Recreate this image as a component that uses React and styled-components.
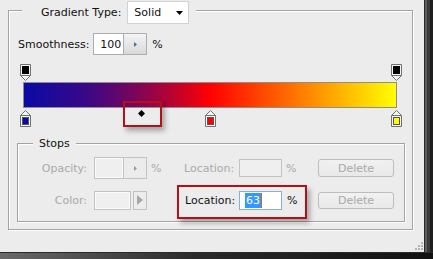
import React from 'react';
import styled, { createGlobalStyle } from 'styled-components';

const GlobalStyle = createGlobalStyle`
  html, body {
    margin: 0;
    padding: 0;
    background: #ececec;
  }
  body {
    font-family: "DejaVu Sans", Verdana, sans-serif;
    font-size: 11px;
    color: #111;
  }
`;

const Screen = styled.div`
  width: 433px;
  height: 259px;
  display: flex;
  flex-direction: column;
  overflow: hidden;
  background: #ececec;
`;

const Main = styled.div`
  display: flex;
  height: 253px;
`;

const Dialog = styled.div`
  position: relative;
  flex: 1;
  box-sizing: border-box;
  padding: 10px 0 0 8px;
`;

const WindowEdge = styled.div`
  width: 9px;
  background: linear-gradient(
    to right,
    #2a2a2a 0 1px,
    #5c5c5c 1px 3px,
    #3a3a3a 3px 6px,
    #1f1f1f 6px
  );
`;

const BottomEdge = styled.div`
  height: 6px;
  border-top: 1px solid #2a2a2a;
  background: linear-gradient(to right, #6a6a6a, #2a2a2a 45%, #111 100%);
`;

const GroupBox = styled.div`
  position: relative;
  box-sizing: border-box;
  width: ${({ $w }) => $w}px;
  height: ${({ $h }) => $h}px;
  margin: ${({ $m }) => $m || 0};
  border: 1px solid #a3a3a3;
  box-shadow: inset 1px 1px 0 #fff, 1px 1px 0 #fff;
`;

const Legend = styled.div`
  display: flex;
  align-items: center;
  width: fit-content;
  height: ${({ $h }) => $h}px;
  margin: ${({ $m }) => $m};
  padding: ${({ $p }) => $p};
  gap: 6px;
  background: #ececec;
  white-space: nowrap;
`;

const Dropdown = styled.div`
  display: flex;
  align-items: center;
  justify-content: space-between;
  box-sizing: border-box;
  width: 62px;
  height: 23px;
  padding: 0 5px 0 6px;
  background: #fff;
  border: 1px solid #d2d2d2;
`;

const Row = styled.div`
  display: flex;
  align-items: center;
  margin: ${({ $m }) => $m};
  white-space: nowrap;
`;

const Label = styled.span`
  color: ${({ $off }) => ($off ? '#a9a9a9' : '#111')};
  margin-right: ${({ $mr }) => $mr || 0}px;
`;

const NumBox = styled.div`
  display: flex;
  align-items: center;
  box-sizing: border-box;
  width: ${({ $w }) => $w}px;
  height: ${({ $h }) => $h}px;
  padding-left: 6px;
  border: 1px solid ${({ $off }) => ($off ? '#c2c2c2' : '#adadad')};
  background: ${({ $off }) => ($off ? '#efefef' : '#fff')};
  box-shadow: ${({ $off }) => ($off ? 'inset 0 0 0 1px #fbfbfb' : 'none')};
`;

const SpinButton = styled.div`
  display: flex;
  align-items: center;
  justify-content: center;
  box-sizing: border-box;
  width: ${({ $w }) => $w}px;
  height: ${({ $h }) => $h}px;
  margin-left: ${({ $gap }) => $gap || 0}px;
  border: 1px solid ${({ $off }) => ($off ? '#c2c2c2' : '#adadad')};
  border-left-width: ${({ $gap }) => ($gap ? 1 : 0)}px;
  background: ${({ $off }) =>
    $off ? '#ececec' : 'linear-gradient(#f4f4f4, #d9d9d9)'};
`;

const Percent = styled.span`
  margin-left: ${({ $ml }) => $ml}px;
  color: ${({ $off }) => ($off ? '#a9a9a9' : '#111')};
`;

const Editor = styled.div`
  position: relative;
  width: 374px;
  margin: 9px 0 0 14px;
`;

const Track = styled.div`
  position: relative;
  height: ${({ $h }) => $h}px;
`;

const StopMark = styled.div`
  position: absolute;
  top: ${({ $top }) => $top}px;
  width: 11px;
  height: 17px;
  line-height: 0;
`;

const Bar = styled.div`
  box-sizing: border-box;
  height: 26px;
  border: 1px solid #8e8e8e;
`;

const Callout = styled.div`
  position: absolute;
  box-sizing: border-box;
  border: 2px solid #b3111a;
  box-shadow: 3px 4px 5px rgba(0, 0, 0, 0.3);
  pointer-events: none;
`;

const StopGrid = styled.div`
  display: grid;
  grid-template-columns: 76px 53px 37px 55px 43px 36px 76px;
  grid-template-rows: 22px 22px;
  row-gap: 10px;
  align-items: center;
  margin-top: 7px;
  white-space: nowrap;
`;

const GridLabel = styled.span`
  text-align: ${({ $right }) => ($right ? 'right' : 'left')};
  padding-right: ${({ $right }) => ($right ? 7 : 0)}px;
  padding-left: ${({ $pl }) => $pl || 0}px;
  color: ${({ $off }) => ($off ? '#a9a9a9' : '#111')};
`;

const Cell = styled.div`
  display: flex;
  align-items: center;
`;

const LocField = styled.div`
  display: flex;
  align-items: center;
  box-sizing: border-box;
  width: 43px;
  height: ${({ $h }) => $h}px;
  padding-left: 5px;
  border: 1px solid ${({ $focus }) => ($focus ? '#86aee0' : '#c2c2c2')};
  background: ${({ $focus }) => ($focus ? '#fff' : '#efefef')};
`;

const Selected = styled.span`
  display: inline-block;
  height: 15px;
  line-height: 15px;
  padding: 0 1px;
  background: #3399ff;
  color: #fff;
`;

const Caret = styled.span`
  display: inline-block;
  width: 1px;
  height: 15px;
  background: #c36a1f;
`;

const DeleteButton = styled.div`
  display: flex;
  align-items: center;
  justify-content: center;
  box-sizing: border-box;
  width: 76px;
  height: ${({ $h }) => $h}px;
  border: 1px solid #bdbdbd;
  border-radius: 3px;
  background: linear-gradient(#f1f1f1, #e9e9e9);
  color: #a9a9a9;
`;

const Grip = styled.div`
  position: absolute;
  right: 1px;
  bottom: 2px;
  line-height: 0;
`;

const Triangle = ({ dir = 'right', w, h, color }) => {
  const pts =
    dir === 'right' ? `0,0 ${w},${h / 2} 0,${h}` : `0,0 ${w},0 ${w / 2},${h}`;
  return (
    <svg width={w} height={h} viewBox={`0 0 ${w} ${h}`}>
      <polygon points={pts} fill={color} />
    </svg>
  );
};

const OpacityStop = () => (
  <svg width="11" height="17" viewBox="0 0 11 17">
    <path d="M0.5 0.5H10.5V11.5L5.5 16.5L0.5 11.5Z" fill="#f6f6f6" stroke="#707070" />
    <path d="M0.5 11.5H10.5" stroke="#707070" />
    <rect x="2" y="2" width="7" height="8" fill="#000" />
  </svg>
);

const ColorStop = ({ color }) => (
  <svg width="11" height="17" viewBox="0 0 11 17">
    <path d="M5.5 0.5L10.5 5.5V16.5H0.5V5.5Z" fill="#f6f6f6" stroke="#707070" />
    <path d="M0.5 5.5H10.5" stroke="#707070" />
    <rect x="2.5" y="7.5" width="6" height="7" fill={color} stroke="#555" />
  </svg>
);

const Midpoint = () => (
  <svg width="7" height="7" viewBox="0 0 7 7">
    <polygon points="3.5,0 7,3.5 3.5,7 0,3.5" fill="#000" />
  </svg>
);

const GripDots = () => (
  <svg width="9" height="10" viewBox="0 0 9 10">
    {[
      [7, 0],
      [7, 3],
      [4, 3],
      [7, 6],
      [4, 6],
      [1, 6],
    ].map(([x, y]) => (
      <rect key={`${x}-${y}`} x={x} y={y + 2} width="2" height="2" fill="#b4b4b4" />
    ))}
  </svg>
);

const colorStops = [
  { id: 'blue', at: 0, color: '#0a0aa6' },
  { id: 'red', at: 50, color: '#ff0000' },
  { id: 'yellow', at: 100, color: '#ffff00' },
];

const opacityStops = [
  { id: 'start', at: 0 },
  { id: 'end', at: 100 },
];

// midpoint between blue and red stops, "Location: 63"
const midpoint = 63;
const midAt = colorStops[0].at + (colorStops[1].at - colorStops[0].at) * (midpoint / 100);

const stopX = (at) => 2 + (at / 100) * 371;

const barGradient = `linear-gradient(to right, ${colorStops[0].color} 0%, ${midAt}%, ${colorStops[1].color} ${colorStops[1].at}%, ${colorStops[2].color} 100%)`;

const App = () => (
  <>
    <GlobalStyle />
    <Screen>
      <Main>
        <Dialog>
          <GroupBox $w={405} $h={220}>
            <Legend $h={23} $m="-10px 0 0 13px" $p="0 7px 0 19px">
              <Label>Gradient Type:</Label>
              <Dropdown>
                <span>Solid</span>
                <Triangle dir="down" w={7} h={4} color="#000" />
              </Dropdown>
            </Legend>

            <Row $m="9px 0 0 9px">
              <Label $mr={4}>Smoothness:</Label>
              <NumBox $w={31} $h={22}>100</NumBox>
              <SpinButton $w={23} $h={22}>
                <Triangle w={3} h={5} color="#5068b4" />
              </SpinButton>
              <Percent $ml={5}>%</Percent>
            </Row>

            <Editor>
              <Track $h={18}>
                {opacityStops.map((s) => (
                  <StopMark key={s.id} $top={0} style={{ left: stopX(s.at) - 5.5 }}>
                    <OpacityStop />
                  </StopMark>
                ))}
              </Track>
              <Bar style={{ background: barGradient }} />
              <Track $h={19}>
                {colorStops.map((s) => (
                  <StopMark key={s.id} $top={2} style={{ left: stopX(s.at) - 5.5 }}>
                    <ColorStop color={s.color} />
                  </StopMark>
                ))}
                <StopMark $top={1.5} style={{ left: stopX(midAt) - 3.5 }}>
                  <Midpoint />
                </StopMark>
              </Track>
              <Callout style={{ left: 100, top: 37, width: 39, height: 26 }} />
            </Editor>

            <GroupBox $w={388} $h={79} $m="16px 0 0 8px">
              <Legend $h={13} $m="-7px 0 0 15px" $p="0 6px">
                <Label>Stops</Label>
              </Legend>

              <StopGrid>
                <GridLabel $right $off>Opacity:</GridLabel>
                <Cell>
                  <NumBox $w={30} $h={22} $off />
                  <SpinButton $w={23} $h={22} $off>
                    <Triangle w={3} h={5} color="#9a9a9a" />
                  </SpinButton>
                </Cell>
                <GridLabel $pl={4} $off>%</GridLabel>
                <GridLabel $off>Location:</GridLabel>
                <Cell>
                  <LocField $h={18} />
                </Cell>
                <GridLabel $pl={4} $off>%</GridLabel>
                <DeleteButton $h={18}>Delete</DeleteButton>

                <GridLabel $right $off>Color:</GridLabel>
                <Cell>
                  <NumBox $w={42} $h={19} $off />
                  <SpinButton $w={16} $h={19} $gap={2} $off>
                    <Triangle w={6} h={10} color="#a6a6a6" />
                  </SpinButton>
                </Cell>
                <span />
                <GridLabel $pl={1}>Location:</GridLabel>
                <Cell>
                  <LocField $h={19} $focus>
                    <Selected>63</Selected>
                    <Caret />
                  </LocField>
                </Cell>
                <GridLabel $pl={5}>%</GridLabel>
                <DeleteButton $h={17}>Delete</DeleteButton>
              </StopGrid>

              <Callout style={{ left: 159, top: 41, width: 130, height: 34 }} />
            </GroupBox>
          </GroupBox>
          <Grip>
            <GripDots />
          </Grip>
        </Dialog>
        <WindowEdge />
      </Main>
      <BottomEdge />
    </Screen>
  </>
);

export default App;
